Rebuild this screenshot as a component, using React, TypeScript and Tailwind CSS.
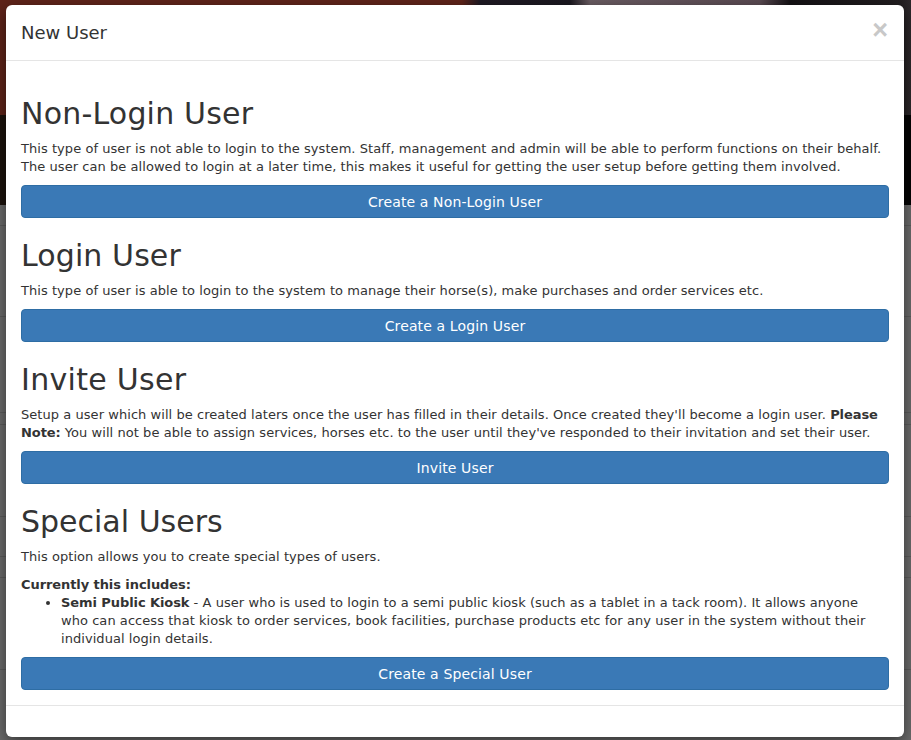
import React from "react";

function Btn({ children }: { children: React.ReactNode }) {
  return (
    <button className="block w-full h-[33px] rounded-[4px] border border-[#2e6da4] bg-[#3a79b6] text-white text-[14px] leading-[20px] tracking-[0.13px] text-center">
      {children}
    </button>
  );
}

function H({ children, className }: { children: React.ReactNode; className: string }) {
  return <h1 className={"text-[30px] leading-[33px] font-normal text-[#333] mt-[21px] mb-[10px] " + className}>{children}</h1>;
}

const rows = ["h-[21px]", "h-[91px]", "h-[96px]", "h-[12px]", "h-[92px]", "h-[40px]", "h-[21px]", "h-[92px]"];

export default function App() {
  return (
    <div className="relative w-[911px] h-[740px] overflow-hidden bg-[#6b6b6b] font-['DejaVu_Sans','Verdana',sans-serif] text-[13px] leading-[18px] tracking-[0.054px] text-[#333]">
      <div className="flex flex-col">
        <div className="h-[115px] bg-[linear-gradient(90deg,#5f241a_0px,#5f241a_462px,#1f1a24_480px,#1b1820_570px,#6a5c62_590px,#5a4a52_760px,#151215_790px,#221e20_900px,#2d282b_911px)]" />
        <div className="h-[90px] bg-[linear-gradient(90deg,#1c130d_0px,#140e0a_300px,#050505_800px,#040404_911px)]" />
        {rows.map((r, i) => (
          <div key={i} className={r + " border-b border-[#5c5c5c]"} />
        ))}
      </div>
      <div className="absolute left-[6px] top-[5px] w-[898px] h-[732px] bg-white rounded-[6px] shadow-[0_5px_15px_rgba(0,0,0,0.5)] flex flex-col">
        <div className="h-[56px] border-b border-[#e5e5e5] px-[15px] flex items-center justify-between shrink-0">
          <span className="text-[18px] tracking-normal text-[#333]">New User</span>
          <span className="font-['Liberation_Sans',sans-serif] font-bold text-[27px] leading-none text-[#c8c8c8] mb-[4px] mr-px">×</span>
        </div>
        <div className="flex-1 px-[15px] pt-[15px]">
          <H className="tracking-[0.2px]">Non-Login User</H>
          <p className="mb-[9px]">This type of user is not able to login to the system. Staff, management and admin will be able to perform functions on their behalf. The user can be allowed to login at a later time, this makes it useful for getting the user setup before getting them involved.</p>
          <Btn>Create a Non-Login User</Btn>
          <H className="tracking-[0.1px]">Login User</H>
          <p className="mb-[9px]">This type of user is able to login to the system to manage their horse(s), make purchases and order services etc.</p>
          <Btn>Create a Login User</Btn>
          <H className="tracking-[0.3px]">Invite User</H>
          <p className="mb-[9px]">Setup a user which will be created laters once the user has filled in their details. Once created they'll become a login user. <b className="tracking-[-0.08px]">Please Note:</b> You will not be able to assign services, horses etc. to the user until they've responded to their invitation and set their user.</p>
          <Btn>Invite User</Btn>
          <H className="tracking-normal">Special Users</H>
          <p className="mb-[10px]">This option allows you to create special types of users.</p>
          <p><b className="tracking-[-0.08px]">Currently this includes:</b></p>
          <ul className="list-disc pl-[40px] mb-[9px]">
            <li><b className="tracking-[-0.08px]">Semi Public Kiosk</b> - A user who is used to login to a semi public kiosk (such as a tablet in a tack room). It allows anyone who can access that kiosk to order services, book facilities, purchase products etc for any user in the system without their individual login details.</li>
          </ul>
          <Btn>Create a Special User</Btn>
        </div>
        <div className="h-[32px] border-t border-[#e5e5e5] shrink-0" />
      </div>
    </div>
  );
}
